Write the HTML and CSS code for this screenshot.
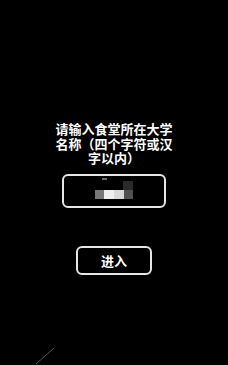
FILE: index.html
```html
<!DOCTYPE html>
<html>
<head>
  <meta charset="utf-8">
  <meta name="viewport" content="width=device-width, user-scalable=no">
  <title>进入</title>
  <link rel="stylesheet" href="styles.css">
</head>
<body>
    <div class="page">
        <div class="prompt">请输入食堂所在大学名称（四个字符或汉字以内）</div>
        <div class="field">
            <svg class="cursor" width="38" height="22" viewBox="0 0 38 22">
                <rect x="7" y="0" width="5" height="2" fill="#6a6a6a"/>
                <rect x="28" y="3" width="10" height="9" fill="#2a2a2a"/>
                <rect x="0" y="12" width="9" height="9" fill="#787878"/>
                <rect x="9" y="12" width="10" height="9" fill="#efefef"/>
                <rect x="19" y="12" width="10" height="9" fill="#d8d8d8"/>
                <rect x="29" y="12" width="9" height="9" fill="#505050"/>
            </svg>
        </div>
        <div class="enter">进入</div>
    </div>
    <svg class="stroke" width="60" height="20" viewBox="0 0 60 20">
        <line x1="36" y1="19" x2="54" y2="3" stroke="#5a5a5a" stroke-width="1"/>
    </svg>
</body>
</html>
```
FILE: styles.css
```css
body, html {
    height: 100%;
    min-height: 100%;
}
body {
    margin: 0;
    padding: 0;
    background: #000;
    color: #fff;
    font-family: "Noto Sans CJK SC", "Noto Sans", sans-serif;
    font-weight: bold;
    position: relative;
    overflow: hidden;
}
.page {
    display: flex;
    flex-direction: column;
    align-items: center;
    padding-top: 122px;
}
.prompt {
    width: 118px;
    font-size: 13px;
    line-height: 14.5px;
    text-align: center;
}
.field {
    box-sizing: border-box;
    width: 104px;
    height: 34px;
    margin-top: 8px;
    border: 2px solid #e6e6e6;
    border-radius: 6px;
    display: flex;
    justify-content: center;
    align-items: center;
}
.cursor {
    display: block;
    margin-top: -3px;
}
.enter {
    box-sizing: border-box;
    width: 76px;
    height: 29px;
    margin-top: 38px;
    border: 2px solid #e6e6e6;
    border-radius: 6px;
    font-size: 13px;
    display: flex;
    justify-content: center;
    align-items: center;
}
.stroke {
    position: absolute;
    left: 0;
    bottom: 0;
}
```
